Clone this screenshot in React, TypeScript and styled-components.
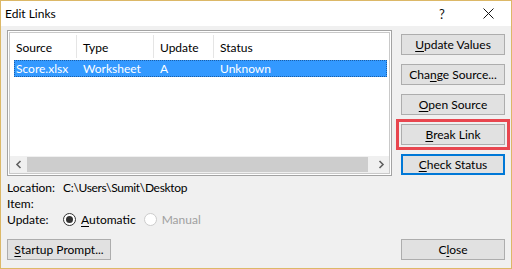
import React from "react";
import styled, { createGlobalStyle } from "styled-components";

const GlobalStyle = createGlobalStyle`
  html, body {
    margin: 0;
    padding: 0;
    background: #ffffff;
  }
  * {
    box-sizing: border-box;
  }
`;

const StyledWindow = styled.div`
  width: 512px;
  height: 269px;
  border: 1px solid #dcb867;
  display: flex;
  flex-direction: column;
  font-family: Lato, "Liberation Sans", sans-serif;
  font-size: 12px;
  color: #000;
`;

const StyledTitleBar = styled.div`
  height: 25px;
  background: #ffffff;
  display: flex;
  align-items: center;
  padding-left: 4px;
`;

const StyledTitle = styled.div`
  flex: 1;
  font-size: 12px;
`;

const StyledCaptionButton = styled.div`
  width: 46px;
  height: 25px;
  display: flex;
  align-items: center;
  justify-content: center;
  font-size: 13px;
  color: #111;
`;

const StyledBody = styled.div`
  flex: 1;
  background: #f0f0f0;
  display: flex;
  flex-direction: column;
  padding: 4px 6px 8px 6px;
`;

const StyledTopRow = styled.div`
  display: flex;
  gap: 9px;
`;

const StyledListOuter = styled.div`
  width: 385px;
  height: 146px;
  border: 1px solid #a3a3a3;
  background: #ffffff;
  padding: 1px;
`;

const StyledListInner = styled.div`
  height: 100%;
  border: 1px solid #c9c9c9;
  display: flex;
  flex-direction: column;
`;

const StyledHeaderRow = styled.div`
  display: flex;
  height: 26px;
  align-items: stretch;
  padding: 2px 0 1px 0;
`;

const StyledHeaderCell = styled.div<{ w?: number; last?: boolean }>`
  width: ${({ w }) => (w ? `${w}px` : "auto")};
  flex: ${({ w }) => (w ? "none" : "1")};
  border-right: ${({ last }) => (last ? "none" : "1px solid #e5e5e5")};
  padding-left: 6px;
  padding-top: 2px;
  display: flex;
  align-items: center;
`;

const StyledDataRow = styled.div<{ selected?: boolean }>`
  display: flex;
  height: 17px;
  margin: 1px 2px 0 4px;
  align-items: center;
  background: ${({ selected }) => (selected ? "#3399ff" : "transparent")};
  color: ${({ selected }) => (selected ? "#ffffff" : "#000")};
  outline: ${({ selected }) => (selected ? "1px dotted #1b5fa8" : "none")};
  outline-offset: -1px;
`;

const StyledDataCell = styled.div<{ w?: number; pad: number }>`
  width: ${({ w }) => (w ? `${w}px` : "auto")};
  flex: ${({ w }) => (w ? "none" : "1")};
  padding-left: ${({ pad }) => pad}px;
  white-space: nowrap;
`;

const StyledListSpacer = styled.div`
  flex: 1;
`;

const StyledScrollBar = styled.div`
  height: 17px;
  background: #f0f0f0;
  display: flex;
  align-items: stretch;
`;

const StyledScrollArrow = styled.div`
  width: 17px;
  display: flex;
  align-items: center;
  justify-content: center;
`;

const StyledScrollTrack = styled.div`
  flex: 1;
  display: flex;
  align-items: stretch;
  padding: 1px 4px 1px 0;
`;

const StyledScrollThumb = styled.div`
  flex: 1;
  background: #cdcdcd;
`;

const StyledButtonColumn = styled.div`
  width: 104px;
  display: flex;
  flex-direction: column;
  gap: 9px;
  padding-top: 4px;
`;

const StyledButton = styled.div<{ focused?: boolean; highlighted?: boolean }>`
  width: 104px;
  height: 21px;
  background: #e1e1e1;
  border: ${({ focused }) =>
    focused ? "2px solid #0078d7" : "1px solid #adadad"};
  display: flex;
  align-items: center;
  justify-content: center;
  white-space: nowrap;
  outline: ${({ highlighted }) =>
    highlighted ? "3px solid #e8464f" : "none"};
  outline-offset: 2px;
`;

const StyledKey = styled.span`
  text-decoration: underline;
  text-underline-offset: 2px;
`;

const StyledInfo = styled.div`
  margin-top: 3px;
  display: flex;
  flex-direction: column;
`;

const StyledInfoRow = styled.div`
  height: 16px;
  display: flex;
  align-items: center;
`;

const StyledLabel = styled.div`
  width: 56px;
`;

const StyledPath = styled.span`
  letter-spacing: -0.3px;
`;

const StyledRadioGroup = styled.label<{ disabled?: boolean }>`
  display: flex;
  align-items: center;
  gap: 5px;
  margin-right: 8px;
  color: ${({ disabled }) => (disabled ? "#a0a0a0" : "#000")};
`;

const StyledRadio = styled.span<{ checked?: boolean; disabled?: boolean }>`
  width: 13px;
  height: 13px;
  border-radius: 50%;
  border: 1px solid ${({ disabled }) => (disabled ? "#cccccc" : "#333333")};
  background: #ffffff;
  display: flex;
  align-items: center;
  justify-content: center;
  &::after {
    content: "";
    width: 7px;
    height: 7px;
    border-radius: 50%;
    background: #333333;
    display: ${({ checked }) => (checked ? "block" : "none")};
  }
`;

const StyledBottomRow = styled.div`
  margin-top: auto;
  display: flex;
  justify-content: space-between;
`;

const columns = [
  { title: "Source", w: 67 },
  { title: "Type", w: 77 },
  { title: "Update", w: 60 },
  { title: "Status" },
];

function Chevron({ dir }: { dir: "left" | "right" }) {
  return (
    <svg width="8" height="9" viewBox="0 0 8 9">
      <polyline
        points={dir === "left" ? "5.5,1 2,4.5 5.5,8" : "2.5,1 6,4.5 2.5,8"}
        fill="none"
        stroke="#606060"
        strokeWidth="1.6"
      />
    </svg>
  );
}

export default function App() {
  return (
    <>
      <GlobalStyle />
      <StyledWindow>
        <StyledTitleBar>
          <StyledTitle>Edit Links</StyledTitle>
          <StyledCaptionButton>?</StyledCaptionButton>
          <StyledCaptionButton>
            <svg width="11" height="11" viewBox="0 0 11 11">
              <path d="M0.5 0.5 L10.5 10.5 M10.5 0.5 L0.5 10.5" stroke="#111" strokeWidth="1" />
            </svg>
          </StyledCaptionButton>
        </StyledTitleBar>
        <StyledBody>
          <StyledTopRow>
            <StyledListOuter>
              <StyledListInner>
                <StyledHeaderRow>
                  {columns.map((c, i) => (
                    <StyledHeaderCell key={c.title} w={c.w} last={i === columns.length - 1}>
                      {c.title}
                    </StyledHeaderCell>
                  ))}
                </StyledHeaderRow>
                <StyledDataRow selected>
                  <StyledDataCell w={63} pad={2}>Score.xlsx</StyledDataCell>
                  <StyledDataCell w={77} pad={6}>Worksheet</StyledDataCell>
                  <StyledDataCell w={60} pad={6}>A</StyledDataCell>
                  <StyledDataCell pad={6}>Unknown</StyledDataCell>
                </StyledDataRow>
                <StyledListSpacer />
                <StyledScrollBar>
                  <StyledScrollArrow>
                    <Chevron dir="left" />
                  </StyledScrollArrow>
                  <StyledScrollTrack>
                    <StyledScrollThumb />
                  </StyledScrollTrack>
                  <StyledScrollArrow>
                    <Chevron dir="right" />
                  </StyledScrollArrow>
                </StyledScrollBar>
              </StyledListInner>
            </StyledListOuter>
            <StyledButtonColumn>
              <StyledButton>
                <StyledKey>U</StyledKey>pdate Values
              </StyledButton>
              <StyledButton>
                Cha<StyledKey>n</StyledKey>ge Source...
              </StyledButton>
              <StyledButton>
                <StyledKey>O</StyledKey>pen Source
              </StyledButton>
              <StyledButton highlighted>
                <StyledKey>B</StyledKey>reak Link
              </StyledButton>
              <StyledButton focused>
                <StyledKey>C</StyledKey>heck Status
              </StyledButton>
            </StyledButtonColumn>
          </StyledTopRow>
          <StyledInfo>
            <StyledInfoRow>
              <StyledLabel>Location:</StyledLabel>
              <StyledPath>C:\Users\Sumit\Desktop</StyledPath>
            </StyledInfoRow>
            <StyledInfoRow>
              <StyledLabel>Item:</StyledLabel>
            </StyledInfoRow>
            <StyledInfoRow>
              <StyledLabel>Update:</StyledLabel>
              <StyledRadioGroup>
                <StyledRadio checked />
                <span>
                  <StyledKey>A</StyledKey>utomatic
                </span>
              </StyledRadioGroup>
              <StyledRadioGroup disabled>
                <StyledRadio disabled />
                <span>Manual</span>
              </StyledRadioGroup>
            </StyledInfoRow>
          </StyledInfo>
          <StyledBottomRow>
            <StyledButton>
              <StyledKey>S</StyledKey>tartup Prompt...
            </StyledButton>
            <StyledButton>
              C<StyledKey>l</StyledKey>ose
            </StyledButton>
          </StyledBottomRow>
        </StyledBody>
      </StyledWindow>
    </>
  );
}
